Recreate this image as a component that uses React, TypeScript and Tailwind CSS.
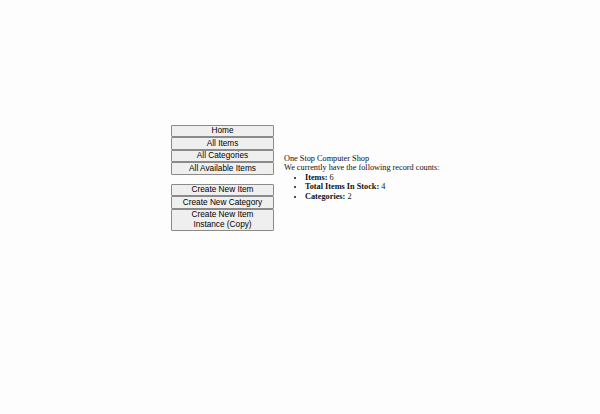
import React from "react";

const navTop = ["Home", "All Items", "All Categories", "All Available Items"];
const navBottom = ["Create New Item", "Create New Category", "Create New Item Instance (Copy)"];

function Btn({ label, tall }: { label: string; tall?: boolean }) {
  return (
    <button
      className={`w-[103px] ${tall ? "h-[22px]" : "h-[12.5px] whitespace-nowrap"} flex items-center justify-center border border-[#8a8a8a] bg-[#efefef] text-black text-[8.25px] leading-[9.4px] px-[6px] rounded-[1px] text-center`}
      style={{ fontFamily: '"Liberation Sans", Arial, sans-serif' }}
    >
      {label}
    </button>
  );
}

export default function App() {
  return (
    <div className="w-[600px] h-[414px] bg-[#fefdfd] pt-[124.7px] pl-[171px]">
      <div className="flex items-center gap-[10px]">
        <div className="flex flex-col gap-[9px]">
          <div className="flex flex-col">
            {navTop.map((l) => (
              <Btn key={l} label={l} />
            ))}
          </div>
          <div className="flex flex-col">
            {navBottom.map((l, i) => (
              <Btn key={l} label={l} tall={i === 2} />
            ))}
          </div>
        </div>
        <div
          className="text-[8.25px] leading-[9.5px] text-[#111]"
          style={{ fontFamily: '"Liberation Serif", "Times New Roman", serif' }}
        >
          <div>One Stop Computer Shop</div>
          <div>We currently have the following record counts:</div>
          <ul className="list-disc pl-[21px]">
            <li>
              <b>Items:</b> 6
            </li>
            <li>
              <b>Total Items In Stock:</b> 4
            </li>
            <li>
              <b>Categories:</b> 2
            </li>
          </ul>
        </div>
      </div>
    </div>
  );
}
